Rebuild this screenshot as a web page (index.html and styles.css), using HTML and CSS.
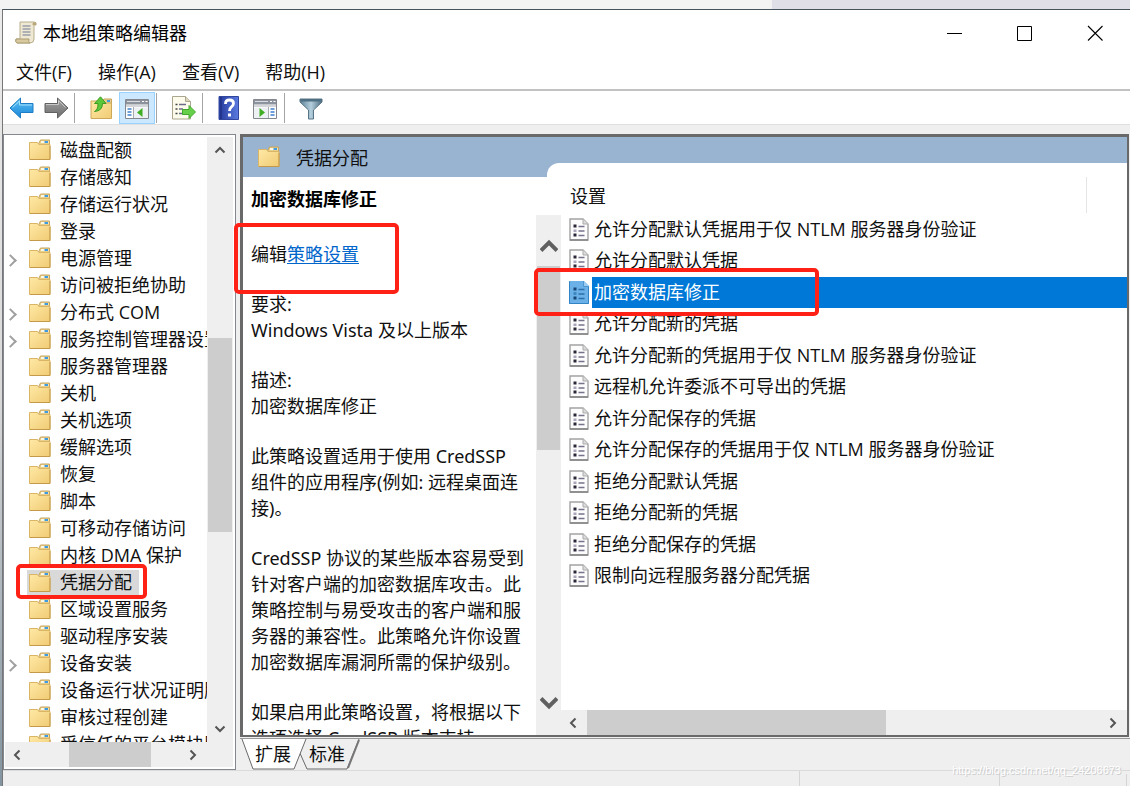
FILE: index.html
```html
<!DOCTYPE html>
<html lang="zh-CN">
<head>
<meta charset="utf-8">
<title>本地组策略编辑器</title>
<link rel="stylesheet" href="styles.css">
</head>
<body>
<svg class="defs" aria-hidden="true">
  <defs>
    <linearGradient id="gFolder" x1="0" y1="0" x2="1" y2="1"><stop offset="0" stop-color="#ffe9a6"/><stop offset="1" stop-color="#f0cb74"/></linearGradient>
    <linearGradient id="gBlue" x1="0" y1="0" x2="0" y2="1"><stop offset="0" stop-color="#5cc4f5"/><stop offset="1" stop-color="#1a84d8"/></linearGradient>
    <linearGradient id="gGray" x1="0" y1="0" x2="0" y2="1"><stop offset="0" stop-color="#a5a5a5"/><stop offset="1" stop-color="#6c6c6c"/></linearGradient>
    <linearGradient id="gHelp" x1="0" y1="0" x2="1" y2="0"><stop offset="0" stop-color="#263a9c"/><stop offset="1" stop-color="#5a7be0"/></linearGradient>
    <linearGradient id="gFunnel" x1="0" y1="0" x2="1" y2="0"><stop offset="0" stop-color="#5d8296"/><stop offset=".5" stop-color="#b4cfdd"/><stop offset="1" stop-color="#4c6e82"/></linearGradient>
    <symbol id="folder" viewBox="0 0 22 22">
      <path d="M9.500 5l2-4h9v6H9.500z" fill="#e8cf8c" stroke="#c7a55c"/>
      <path d="M12 2h7.500v2H12z" fill="#fff8e0"/><path d="M15.500 2H19v2h-3.500z" fill="#3f9be0"/>
      <path d="M.5 3.500h8l1.500 2h11V20.500H.5z" fill="url(#gFolder)" stroke="#d9b565"/>
      <path d="M1 20.500h20V7" fill="none" stroke="#c49a4a"/>
    </symbol>
    <symbol id="policy" viewBox="0 0 20 23">
      <path d="M1 1h13l5 5v16H1z" fill="#fcfcfc" stroke="#a2a2a2" stroke-width="1.400"/>
      <path d="M14 1v5h5" fill="#ddd" stroke="#aaa"/><path d="M1 22h18" stroke="#858585" stroke-width="1.500"/>
      <path d="M4.500 6.500h3v3h-3zM4.500 15.500h3v3h-3z" fill="#2b2638"/><path d="M4.500 11.500h3v2.500h-3z" fill="#aaa4bb"/>
      <path d="M9.500 8.500h6M9.500 13h6M9.500 17.500h6" stroke="#77728b" stroke-width="1.300"/>
    </symbol>
    <symbol id="policy-on" viewBox="0 0 20 23">
      <path d="M0 0h15l5 5v18H0z" fill="#6bb1e8"/><path d="M.5 .5V22.500H19.500V6" fill="none" stroke="#3284c4"/>
      <path d="M14.500 0v5.500H20" fill="#9bcdf3" stroke="#4a97d3"/>
      <path d="M4.500 6.500h3v3h-3zM4.500 15.500h3v3h-3z" fill="#164775"/><path d="M4.500 11h3v3h-3z" fill="#3f87c0"/>
      <path d="M9.500 8.500h6M9.500 13h6M9.500 17.500h6" stroke="#2c6ea8" stroke-width="1.300"/>
    </symbol>
    <symbol id="left" viewBox="0 0 10 12"><path d="M7.500 1.500L3 6l4.500 4.500" fill="none" stroke="currentColor" stroke-width="2"/></symbol>
    <symbol id="right" viewBox="0 0 10 12"><path d="M2.500 1.500L7 6l-4.500 4.500" fill="none" stroke="currentColor" stroke-width="2"/></symbol>
    <symbol id="up" viewBox="0 0 12 10"><path d="M1.500 7.500L6 3l4.500 4.500" fill="none" stroke="currentColor" stroke-width="2"/></symbol>
    <symbol id="down" viewBox="0 0 12 10"><path d="M1.500 2.500L6 7l4.500-4.500" fill="none" stroke="currentColor" stroke-width="2"/></symbol>
  </defs>
</svg>
<div class="window">
  <header class="titlebar">
    <svg class="app-icon" viewBox="0 0 22 23"><path d="M5 1h14q3 0 2 3h-2v14q0 4-4 4H2q-2-1-1-4h4z" fill="#efe8d2" stroke="#b9ad8c"/><path d="M19 1q-2 1-1.500 3H21q1-2-2-3z" fill="#b9a878"/><path d="M1 18h13q-1 3 1 4H2q-2-1-1-4z" fill="#d8c99e" stroke="#a99b74"/><path d="M7.500 5h8M7.500 8h8M7.500 11h8M7.500 14h8" stroke="#9b9dab" stroke-width="1.300"/></svg>
    <h1>本地组策略编辑器</h1>
    <div class="caption">
      <button aria-label="最小化"><svg viewBox="0 0 16 16"><path d="M0 8.500h15" stroke="#000"/></svg></button>
      <button aria-label="最大化"><svg viewBox="0 0 16 16"><path d="M.5 1.500h14v14H.5z" fill="none" stroke="#000"/></svg></button>
      <button aria-label="关闭"><svg viewBox="0 0 16 16"><path d="M1 1l14.500 14.500M15.500 1L1 15.500" stroke="#000" stroke-width="1.100"/></svg></button>
    </div>
  </header>
  <nav class="menu">
    <button>文件(F)</button><button>操作(A)</button><button>查看(V)</button><button>帮助(H)</button>
  </nav>
  <div class="toolbar">
    <button class="nav" aria-label="后退"><svg viewBox="0 0 26 24"><path d="M1 12L11.500 2v5.500H24v9H11.500V22z" fill="url(#gBlue)" stroke="#1c7dc4" stroke-linejoin="round"/><path d="M3.500 11.500l7-6.500v4H23" fill="none" stroke="#a3e0fb"/></svg></button>
    <button class="nav" aria-label="前进"><svg viewBox="0 0 26 24"><path d="M25 12L14.500 2v5.500H2v9h12.500V22z" fill="url(#gGray)" stroke="#606060" stroke-linejoin="round"/><path d="M3 8.500h12.500v-4l7 7" fill="none" stroke="#c8c8c8"/></svg></button>
    <i class="sep"></i>
    <button class="gap-l" aria-label="上移"><svg viewBox="0 0 26 24"><path d="M14 6l2-3h7.500v5H14z" fill="#e8cf8c" stroke="#c7a55c"/><path d="M19 4h3v2h-3z" fill="#3f9be0"/><path d="M3 5h9l2 2h9.500v15.500H3z" fill="url(#gFolder)" stroke="#cda85a"/><path d="M6.500 15.500q3.500-1.500 3.500-8H6.500L12.500 .8l5.500 6.700h-3.500Q14.500 15 6.500 15.500z" fill="#5cc738" stroke="#3d9d25"/></svg></button>
    <button class="active" aria-label="显示控制台树"><svg viewBox="0 0 26 24"><path d="M1.500 3.500h23v19h-23z" fill="#fff" stroke="#84888e"/><path d="M2 4h22v4.500H2z" fill="#8d939c"/><path d="M3 5.500h13" stroke="#d8dce2"/><path d="M18 5.500h2M21.500 5.500h2" stroke="#fff"/><path d="M2 10h22M9.500 11v11" stroke="#a8acb2"/><path d="M3.500 13h4M3.500 16h4M3.500 19h4" stroke="#3f7fcd" stroke-width="1.500"/><path d="M10 11.500h14V22H10z" fill="#eef1f3"/><path d="M18.500 12v9L13 16.500z" fill="#3fae24"/></svg></button>
    <i class="sep"></i>
    <button class="gap-l" aria-label="导出列表"><svg viewBox="0 0 26 24"><path d="M2.500 .5h13l5 5v17.500h-18z" fill="#fdfbec" stroke="#aaa68f"/><path d="M15.500 .5v5h5" fill="#ddd8bd" stroke="#aaa68f"/><path d="M5.500 8.500h2M5.500 13h2M5.500 17.500h2" stroke="#444" stroke-width="1.500"/><path d="M9 8.500h7M9 13h4M9 17.500h7" stroke="#6d6b85" stroke-width="1.300"/><path d="M12.500 13.500H19V9.500l6.500 6.500-6.500 6.500v-4h-6.500z" fill="#67d04a" stroke="#42a82d"/></svg></button>
    <i class="sep"></i>
    <button class="gap-l" aria-label="帮助"><svg viewBox="0 0 26 24"><path d="M3 .5h19.500v23H3z" fill="url(#gHelp)" stroke="#33469e"/><path d="M5 1v22" stroke="#182a7b"/><path d="M9.500 8q0-4 4-4t4 3.500q0 2-2.500 3.800-1.500 1.200-1.500 3.700" fill="none" stroke="#fff" stroke-width="2.800"/><path d="M12 17.500h3v3h-3z" fill="#fff"/></svg></button>
    <button aria-label="显示操作窗格"><svg viewBox="0 0 26 24"><path d="M1.500 3.500h23v19h-23z" fill="#fff" stroke="#84888e"/><path d="M2 4h22v4.500H2z" fill="#8d939c"/><path d="M3 5.500h13" stroke="#d8dce2"/><path d="M18 5.500h2M21.500 5.500h2" stroke="#fff"/><path d="M2 10h22M16.500 11v11" stroke="#a8acb2"/><path d="M2 11.500h14V22H2z" fill="#eef1f3"/><path d="M18.500 13h4M18.500 16h4M18.500 19h4" stroke="#3f7fcd" stroke-width="1.500"/><path d="M7.500 12v9L13 16.500z" fill="#3fae24"/></svg></button>
    <i class="sep"></i>
    <button class="gap-l" aria-label="筛选器"><svg viewBox="0 0 26 24"><path d="M2 3h22v3l-8.500 8v9h-5v-9L2 6z" fill="url(#gFunnel)" stroke="#587487"/><path d="M2.500 3h21v2.500h-21z" fill="#4f6f83"/></svg></button>
  </div>
  <div class="panes">
    <aside class="tree-pane">
      <ul class="tree">
        <li><svg><use href="#folder"/></svg><span>磁盘配额</span></li>
        <li><svg><use href="#folder"/></svg><span>存储感知</span></li>
        <li><svg><use href="#folder"/></svg><span>存储运行状况</span></li>
        <li><svg><use href="#folder"/></svg><span>登录</span></li>
        <li class="parent"><svg><use href="#folder"/></svg><span>电源管理</span></li>
        <li><svg><use href="#folder"/></svg><span>访问被拒绝协助</span></li>
        <li class="parent"><svg><use href="#folder"/></svg><span>分布式 COM</span></li>
        <li class="parent"><svg><use href="#folder"/></svg><span>服务控制管理器设置</span></li>
        <li><svg><use href="#folder"/></svg><span>服务器管理器</span></li>
        <li><svg><use href="#folder"/></svg><span>关机</span></li>
        <li><svg><use href="#folder"/></svg><span>关机选项</span></li>
        <li><svg><use href="#folder"/></svg><span>缓解选项</span></li>
        <li><svg><use href="#folder"/></svg><span>恢复</span></li>
        <li><svg><use href="#folder"/></svg><span>脚本</span></li>
        <li><svg><use href="#folder"/></svg><span>可移动存储访问</span></li>
        <li><svg><use href="#folder"/></svg><span>内核 DMA 保护</span></li>
        <li class="current"><svg><use href="#folder"/></svg><span>凭据分配</span><b class="mark mark-tree"></b></li>
        <li><svg><use href="#folder"/></svg><span>区域设置服务</span></li>
        <li><svg><use href="#folder"/></svg><span>驱动程序安装</span></li>
        <li class="parent"><svg><use href="#folder"/></svg><span>设备安装</span></li>
        <li><svg><use href="#folder"/></svg><span>设备运行状况证明服务</span></li>
        <li><svg><use href="#folder"/></svg><span>审核过程创建</span></li>
        <li><svg><use href="#folder"/></svg><span>受信任的平台模块服务</span></li>
      </ul>
      <div class="vbar tree-v"><svg class="ar-v"><use href="#up"/></svg><div class="track"><i></i></div><svg class="ar-v"><use href="#down"/></svg></div>
      <div class="hbar tree-h"><svg class="ar-h"><use href="#left"/></svg><div class="track"><i></i></div><svg class="ar-h"><use href="#right"/></svg></div>
    </aside>
    <main class="result">
      <div class="result-box">
        <div class="banner"><svg><use href="#folder"/></svg><h2>凭据分配</h2></div>
        <section class="detail">
          <div class="desc">
            <h3>加密数据库修正</h3>
            <p>编辑<a href="#policy">策略设置</a><b class="mark mark-edit"></b></p>
            <p>要求:<br>Windows Vista 及以上版本</p>
            <p>描述:<br>加密数据库修正</p>
            <p>此策略设置适用于使用 CredSSP 组件的应用程序(例如: 远程桌面连接)。</p>
            <p>CredSSP 协议的某些版本容易受到针对客户端的加密数据库攻击。此策略控制与易受攻击的客户端和服务器的兼容性。此策略允许你设置加密数据库漏洞所需的保护级别。</p>
            <p>如果启用此策略设置，将根据以下选项选择 CredSSP 版本支持:</p>
          </div>
          <div class="vbar desc-v"><svg class="ar-big" viewBox="0 0 18 14"><path d="M1 11.500L9 3.500l8 8" fill="none" stroke="#606060" stroke-width="4"/></svg><div class="track"><i></i></div><svg class="ar-big" viewBox="0 0 18 14"><path d="M1 2.500l8 8 8-8" fill="none" stroke="#606060" stroke-width="4"/></svg></div>
        </section>
        <section class="listing">
          <div class="list-head">设置</div>
          <ul class="list">
            <li><svg><use href="#policy"/></svg><span>允许分配默认凭据用于仅 NTLM 服务器身份验证</span></li>
            <li><svg><use href="#policy"/></svg><span>允许分配默认凭据</span></li>
            <li class="selected"><svg><use href="#policy-on"/></svg><span>加密数据库修正</span><b class="mark mark-row"></b></li>
            <li><svg><use href="#policy"/></svg><span>允许分配新的凭据</span></li>
            <li><svg><use href="#policy"/></svg><span>允许分配新的凭据用于仅 NTLM 服务器身份验证</span></li>
            <li><svg><use href="#policy"/></svg><span>远程机允许委派不可导出的凭据</span></li>
            <li><svg><use href="#policy"/></svg><span>允许分配保存的凭据</span></li>
            <li><svg><use href="#policy"/></svg><span>允许分配保存的凭据用于仅 NTLM 服务器身份验证</span></li>
            <li><svg><use href="#policy"/></svg><span>拒绝分配默认凭据</span></li>
            <li><svg><use href="#policy"/></svg><span>拒绝分配新的凭据</span></li>
            <li><svg><use href="#policy"/></svg><span>拒绝分配保存的凭据</span></li>
            <li><svg><use href="#policy"/></svg><span>限制向远程服务器分配凭据</span></li>
          </ul>
          <div class="hbar list-h"><svg class="ar-h"><use href="#left"/></svg><div class="track"><i></i></div><svg class="ar-h"><use href="#right"/></svg></div>
        </section>
      </div>
      <div class="tabs">
        <svg class="tab-shape" viewBox="0 0 120 32"><path d="M60 0l-2 12 8 18h40L118 0" fill="#efefef" stroke="#696969"/><path d="M107 29L118 1" stroke="#777" stroke-width="2"/><path d="M1 0l11 30h41L65 0" fill="#fff" stroke="#696969"/></svg>
        <button>扩展</button><button>标准</button>
      </div>
    </main>
  </div>
  <footer class="status"><span></span><i class="wide"></i><i></i><small>https://blog.csdn.net/qq_24206673</small></footer>
</div>
</body>
</html>
```

FILE: styles.css
```css
* { box-sizing: border-box; }
body {
  margin: 0;
  height: 100vh;
  overflow: hidden;
  display: flex;
  padding: 9px 0 0 2px;
  background: linear-gradient(90deg, #f3f3f3 0, #f3f3f3 772px, #dfdfe8 772px) 0 0 / 100% 9px no-repeat, linear-gradient(#ececec 0, #d9d9d9 50%, #8294a0 100%);
  font: 18px/26px "Open Sans", "Noto Sans CJK SC", sans-serif;
  color: #101010;
}
.defs { position: absolute; width: 0; height: 0; }
h1, h2, h3, p, ul { margin: 0; padding: 0; font-size: 18px; font-weight: 400; list-style: none; }
button { border: 0; padding: 0; background: none; font: inherit; color: inherit; }
svg { display: block; flex: none; }
.window { flex: 1; min-width: 0; display: flex; flex-direction: column; background: #efefef; border-top: 1px solid #46535c; border-left: 1px solid #777; }
.titlebar { height: 45px; flex: none; display: flex; align-items: center; background: #fff; padding-left: 12px; }
.app-icon { width: 22px; height: 23px; }
.titlebar h1 { flex: 1; margin-left: 6px; color: #000; }
.caption { display: flex; }
.caption button { width: 70px; display: flex; justify-content: center; }
.caption svg { width: 16px; height: 16px; }
.menu { height: 36px; flex: none; display: flex; align-items: center; gap: 26px; padding-left: 13px; background: #fff; border-bottom: 2px solid #c2c2c2; }
.toolbar { height: 34px; flex: none; display: flex; align-items: center; background: #fff; padding: 1px 0 0 2px; border-bottom: 1px solid #e0e0e0; }
.toolbar button { width: 36px; height: 32px; display: flex; align-items: center; justify-content: center; }
.toolbar .nav { width: 34px; }
.toolbar svg { width: 26px; height: 24px; }
.toolbar .active { background: #cce8ff; border: 1px solid #99d1ff; }
.toolbar .gap-l { margin-left: 8px; }
.sep { width: 1px; height: 30px; margin-left: 1px; background: #a5a5a5; }
.panes { flex: 1; min-height: 0; display: grid; grid-template-columns: 233px minmax(0, 1fr); column-gap: 4px; padding-top: 9px; }
.tree-pane { min-height: 0; display: grid; grid-template: minmax(0, 1fr) 25px / minmax(0, 1fr) 26px; border: 1px solid #828790; background: #fff; padding: 2px 2px 2px 1px; }
.tree { overflow: hidden; }
.tree li { position: relative; height: 27px; display: flex; align-items: center; padding-left: 24px; white-space: nowrap; line-height: 27px; }
.tree svg { width: 22px; height: 22px; margin: 0 3px 2px 0; }
.tree span { padding: 0 6px; }
.tree .current::before { content: ""; position: absolute; left: 22px; width: 112px; height: 26px; background: #d9d9d9; }
.tree .current svg, .tree .current span { position: relative; }
.tree .parent::before { content: ""; position: absolute; left: 1px; top: 11px; width: 7px; height: 7px; border: solid #a0a0a0; border-width: 2px 2px 0 0; transform: rotate(45deg); }
.mark { position: absolute; border: 4px solid #ff2116; border-radius: 5px; z-index: 3; }
.mark-tree { left: 11px; top: -5px; width: 131px; height: 35px; }
.vbar, .hbar { display: flex; background: #efefef; align-items: center; color: #555; }
.vbar { flex-direction: column; }
.track { flex: 1; align-self: stretch; display: flex; }
.vbar .track { flex-direction: column; }
.track i { background: #cdcdcd; }
.ar-v { width: 12px; height: 10px; }
.ar-h { width: 10px; height: 12px; }
.ar-big { width: 18px; height: 14px; }
.tree-v { padding: 8px 0; }
.tree-v .track { padding: 183px 1px 0; }
.tree-v .track i { height: 194px; }
.tree-h { grid-column: 1 / 3; padding: 0 35px 0 7px; }
.tree-h .track { padding-left: 47px; }
.tree-h .track i { width: 82px; }
.result { min-height: 0; display: flex; flex-direction: column; }
.result-box { flex: 1; min-height: 0; display: grid; grid-template: 40px minmax(0, 1fr) / 318px minmax(0, 1fr); background: #fff; border: solid #696969; border-width: 3px 2px 2px 3px; margin-right: 1px; }
.banner { grid-column: 1 / 3; display: flex; align-items: center; padding: 1px 0 0 15px; background: #99b4d1; }
.banner svg { width: 22px; height: 22px; margin-bottom: 2px; }
.banner h2 { margin-left: 16px; }
.detail { min-height: 0; position: relative; display: grid; grid-template-columns: minmax(0, 1fr) 25px; }
.desc { padding: 9px 10px 0 8px; overflow: hidden; line-height: 26px; font-family: "Noto Sans", "Noto Sans CJK SC", sans-serif; }
.desc h3 { font-weight: 700; margin-bottom: 29px; color: #000; }
.desc p { margin-bottom: 24px; }
.desc a { color: #0066cc; text-underline-offset: 2px; }
.mark-edit { left: -9px; top: 46px; width: 165px; height: 71px; }
.desc-v { margin-top: 38px; padding: 24px 0 25px; }
.desc-v .track { padding: 13px 1px 0; }
.desc-v .track i { height: 184px; }
.listing { min-width: 0; min-height: 0; display: flex; flex-direction: column; margin-top: -14px; padding-top: 14px; background: #fff; position: relative; z-index: 1; }
.listing::before { content: ""; position: absolute; left: -14px; top: 0; width: 14px; height: 14px; background: #fff; border-top-left-radius: 12px; }
.list-head { height: 36px; display: flex; align-items: center; padding: 2px 0 0 9px; margin-right: 40px; border-right: 1px solid #e5e5e5; }
.list { flex: 1; }
.list li { position: relative; height: 32px; display: flex; align-items: center; padding-left: 8px; white-space: nowrap; }
.list li:nth-child(even) { height: 31px; }
.list svg { width: 20px; height: 23px; margin-right: 3px; }
.list span { flex: 1; padding-left: 2px; line-height: 31px; }
.list .selected span { background: #0078d7; color: #fff; }
.mark-row { left: -27px; top: -8px; width: 285px; height: 48px; }
.hbar { height: 25px; }
.list-h { padding: 0 9px 0 7px; }
.list-h .track { padding-left: 9px; }
.list-h .track i { width: 299px; }
.tabs { height: 32px; flex: none; position: relative; display: flex; gap: 18px; padding-left: 15px; border-top: 1px solid #999; margin-top: 1px; }
.tab-shape { position: absolute; left: 1px; top: 0; width: 120px; height: 32px; }
.tabs button { position: relative; height: 30px; }
.status { height: 16px; flex: none; position: relative; display: flex; padding-right: 3px; border-top: 1px solid #dadada; }
.status span { flex: 1; border-right: 1px solid #d5d5d5; }
.status i { width: 127px; margin-top: 3px; border-right: 1px solid #d5d5d5; }
.status .wide { width: 200px; }
.status small { position: absolute; right: 9px; top: -8px; font: 11px/15px "Liberation Sans", sans-serif; color: #fff; text-shadow: 1px 1px 0 #ccc; }
```
